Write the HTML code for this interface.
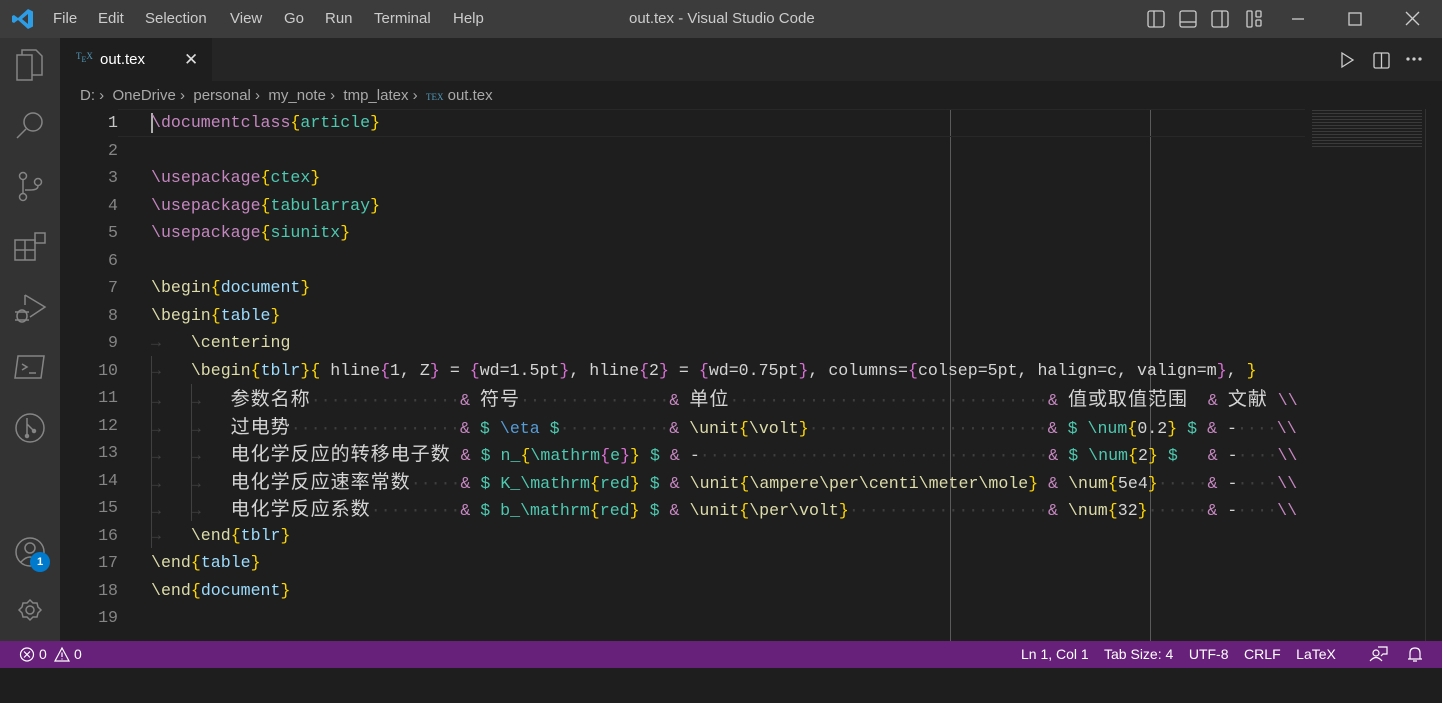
<!DOCTYPE html>
<html><head><meta charset="utf-8"><style>
*{margin:0;padding:0;box-sizing:border-box}
body{width:1442px;height:668px;background:#1e1e1e;overflow:hidden;position:relative;font-family:"Segoe UI","Liberation Sans","Noto Sans CJK SC",sans-serif;color:#ccc}
.abs{position:absolute}
#title{left:0;top:0;width:1442px;height:38px;background:#3c3c3c}
.menu{top:0;height:38px;line-height:38px;font-size:15px;color:#ccc}
#act{left:0;top:38px;width:60px;height:603px;background:#333}
#tabs{left:60px;top:38px;width:1382px;height:43px;background:#252526}
#tab{left:60px;top:38px;width:152px;height:43px;background:#1e1e1e}
#status{left:0;top:641px;width:1442px;height:27px;background:#68217a;color:#fff;font-size:14px;line-height:27px}
.code{font-family:"Liberation Mono","Noto Sans CJK SC",monospace;font-size:16.6px;white-space:pre;color:#d4d4d4}
.ln{left:60px;width:58px;text-align:right;color:#858585}
.row{left:151px;height:27.5px;line-height:27.5px}
.p{color:#c586c0}.y{color:#dcdcaa}.b{color:#9cdcfe}.t{color:#4ec9b0}.g{color:#ffd700}.o{color:#da70d6}.bl{color:#569cd6}.d{color:#3f3f3f}
.k{font-family:"Noto Sans CJK SC",sans-serif;letter-spacing:1px;font-size:19px}
.ar{color:#404040}
</style></head><body>
<div id="title" class="abs"></div>
<svg class="abs" style="left:12px;top:9px" width="22" height="20" viewBox="0 0 22 20"><path d="M16 0 L21 2.5 V17.5 L16 20 L6 11 L2 14 L0 13 V7 L2 6 L6 9 Z M16 5 L10 10 L16 15 Z" fill="#2d9de6"/></svg>
<div class="abs menu" style="left:53px">File</div>
<div class="abs menu" style="left:98px">Edit</div>
<div class="abs menu" style="left:145px">Selection</div>
<div class="abs menu" style="left:230px">View</div>
<div class="abs menu" style="left:284px">Go</div>
<div class="abs menu" style="left:325px">Run</div>
<div class="abs menu" style="left:374px">Terminal</div>
<div class="abs menu" style="left:453px">Help</div>
<div class="abs menu" style="left:629px">out.tex - Visual Studio Code</div>
<svg class="abs" style="left:1145px;top:8px" width="297" height="22" fill="none" stroke="#ccc" stroke-width="1.3">
<rect x="3" y="3" width="16" height="16" rx="2"/><line x1="9" y1="3" x2="9" y2="19"/>
<rect x="35" y="3" width="16" height="16" rx="2"/><line x1="35" y1="14" x2="51" y2="14"/>
<rect x="67" y="3" width="16" height="16" rx="2"/><line x1="77" y1="3" x2="77" y2="19"/>
<rect x="102" y="3" width="5" height="16" rx="1"/><rect x="111" y="3" width="5" height="6" rx="1"/><rect x="111" y="12" width="5" height="6" rx="1"/>
<line x1="147" y1="11" x2="159" y2="11"/>
<rect x="204" y="5" width="12" height="12"/>
<line x1="261" y1="4" x2="274" y2="17"/><line x1="274" y1="4" x2="261" y2="17"/>
</svg>
<div id="act" class="abs"></div>
<svg class="abs" style="left:0;top:40px" width="60" height="600" fill="none" stroke="#858585" stroke-width="1.5">
<path d="M22 15 H32 V40 H17 V15 Z M22 15 V10 H36 L42 16 V35 H32"/>
<circle cx="33" cy="82" r="9"/><line x1="26" y1="89" x2="17" y2="98"/>
<circle cx="23" cy="136" r="3.5"/><circle cx="23" cy="157" r="3.5"/><circle cx="38" cy="142" r="3.5"/><path d="M23 140 V153 M38 146 Q38 150 30 150 H25"/>
<path d="M15 200 H35 V220 H15 Z M15 210 H35 M25 200 V220"/><rect x="35" y="193" width="10" height="10"/>
<path d="M25 255 L45 267 L30 277 M25 255 V265"/><ellipse cx="22" cy="276" rx="5" ry="6"/><path d="M15 272 H29 M15 280 H29"/>
<path d="M18 316 H44 L41 338 H15 Z M22 324 L27 327 L22 330 M29 333 H36"/>
<circle cx="30" cy="388" r="14"/><path d="M27 378 V396 M27 384 L34 391"/><circle cx="27" cy="396" r="1.5" fill="#858585"/><circle cx="34" cy="391" r="1.5" fill="#858585"/>
<circle cx="30" cy="512" r="14"/><circle cx="30" cy="508" r="5"/><path d="M21 522 Q30 512 39 522"/>
<path d="M30 560 l3 3 h4 l1 4 l3 3 l-3 3 l-1 4 h-4 l-3 3 l-3 -3 h-4 l-1 -4 l-3 -3 l3 -3 l1 -4 h4 Z"/><circle cx="30" cy="570" r="4"/>
</svg>
<div class="abs" style="left:30px;top:552px;width:20px;height:20px;border-radius:10px;background:#007acc;color:#fff;font-size:11px;font-weight:bold;text-align:center;line-height:20px">1</div>
<div id="tabs" class="abs"></div>
<div id="tab" class="abs"></div>
<div class="abs" style="left:76px;top:51px;font-size:9px;color:#519aba;font-family:'Liberation Serif',serif">T<sub style="font-size:8px">E</sub>X</div>
<div class="abs" style="left:100px;top:38px;line-height:43px;font-size:15px;color:#fff">out.tex</div>
<div class="abs" style="left:184px;top:38px;line-height:43px;font-size:17px;color:#ddd">✕</div>
<svg class="abs" style="left:1338px;top:50px" width="90" height="20" fill="none" stroke="#ccc" stroke-width="1.3">
<path d="M4 3 L15 10 L4 17 Z"/><rect x="36" y="3" width="15" height="15" rx="1.5"/><line x1="43.5" y1="3" x2="43.5" y2="18"/>
<circle cx="70" cy="9" r="1" fill="#ccc"/><circle cx="76" cy="9" r="1" fill="#ccc"/><circle cx="82" cy="9" r="1" fill="#ccc"/>
</svg>
<div class="abs" style="left:80px;top:83px;font-size:15px;color:#a9a9a9;line-height:25px;white-space:pre">D: ›  OneDrive ›  personal ›  my_note ›  tmp_latex ›  <span style="color:#519aba;font-size:9px;font-family:'Liberation Serif',serif">TEX</span> out.tex</div>
<div class="abs" style="left:950px;top:109px;width:1px;height:532px;background:#5a5a5a"></div>
<div class="abs" style="left:1150px;top:109px;width:1px;height:532px;background:#5a5a5a"></div>
<div class="abs" style="left:118px;top:109px;width:1187px;height:28px;border-top:1px solid #282828;border-bottom:1px solid #282828"></div>
<div class="abs" style="left:151px;top:113px;width:2px;height:20px;background:#aeafad"></div>
<div class="abs" style="left:151px;top:356px;width:1px;height:192px;background:#404040"></div>
<div class="abs" style="left:191px;top:384px;width:1px;height:137px;background:#404040"></div>
<div class="abs" style="left:1425px;top:109px;width:1px;height:532px;background:#333"></div>
<div class="abs" style="left:1312px;top:109px;width:110px;height:40px;opacity:.5;background:repeating-linear-gradient(#1e1e1e 0 1px,#555 1px 2px,#1e1e1e 2px 3px)"></div>

<div class="code">
<div class="abs ln" style="top:109px;line-height:27.5px;color:#c6c6c6">1</div>
<div class="abs ln" style="top:136.5px;line-height:27.5px">2</div>
<div class="abs ln" style="top:164px;line-height:27.5px">3</div>
<div class="abs ln" style="top:191.5px;line-height:27.5px">4</div>
<div class="abs ln" style="top:219px;line-height:27.5px">5</div>
<div class="abs ln" style="top:246.5px;line-height:27.5px">6</div>
<div class="abs ln" style="top:274px;line-height:27.5px">7</div>
<div class="abs ln" style="top:301.5px;line-height:27.5px">8</div>
<div class="abs ln" style="top:329px;line-height:27.5px">9</div>
<div class="abs ln" style="top:356.5px;line-height:27.5px">10</div>
<div class="abs ln" style="top:384px;line-height:27.5px">11</div>
<div class="abs ln" style="top:411.5px;line-height:27.5px">12</div>
<div class="abs ln" style="top:439px;line-height:27.5px">13</div>
<div class="abs ln" style="top:466.5px;line-height:27.5px">14</div>
<div class="abs ln" style="top:494px;line-height:27.5px">15</div>
<div class="abs ln" style="top:521.5px;line-height:27.5px">16</div>
<div class="abs ln" style="top:549px;line-height:27.5px">17</div>
<div class="abs ln" style="top:576.5px;line-height:27.5px">18</div>
<div class="abs ln" style="top:604px;line-height:27.5px">19</div>

<div class="abs row" style="top:109px"><span class="p">\documentclass</span><span class="g">{</span><span class="t">article</span><span class="g">}</span></div>
<div class="abs row" style="top:164px"><span class="p">\usepackage</span><span class="g">{</span><span class="t">ctex</span><span class="g">}</span></div>
<div class="abs row" style="top:191.5px"><span class="p">\usepackage</span><span class="g">{</span><span class="t">tabularray</span><span class="g">}</span></div>
<div class="abs row" style="top:219px"><span class="p">\usepackage</span><span class="g">{</span><span class="t">siunitx</span><span class="g">}</span></div>
<div class="abs row" style="top:274px"><span class="y">\begin</span><span class="g">{</span><span class="b">document</span><span class="g">}</span></div>
<div class="abs row" style="top:301.5px"><span class="y">\begin</span><span class="g">{</span><span class="b">table</span><span class="g">}</span></div>
<div class="abs row" style="top:329px"><span class="ar">→   </span><span class="y">\centering</span></div>
<div class="abs row" style="top:356.5px"><span class="ar">→   </span><span class="y">\begin</span><span class="g">{</span><span class="b">tblr</span><span class="g">}{</span> hline<span class="o">{</span>1, Z<span class="o">}</span> = <span class="o">{</span>wd=1.5pt<span class="o">}</span>, hline<span class="o">{</span>2<span class="o">}</span> = <span class="o">{</span>wd=0.75pt<span class="o">}</span>, columns=<span class="o">{</span>colsep=5pt, halign=c, valign=m<span class="o">}</span>, <span class="g">}</span></div>
<div class="abs row" style="top:384px"><span class="ar">→   →   </span><span class="k">参数名称</span><span class="d">···············</span><span class="p">&amp;</span> <span class="k">符号</span><span class="d">···············</span><span class="p">&amp;</span> <span class="k">单位</span><span class="d">································</span><span class="p">&amp;</span> <span class="k">值或取值范围</span>  <span class="p">&amp;</span> <span class="k">文献</span> <span class="p">\\</span></div>
<div class="abs row" style="top:411.5px"><span class="ar">→   →   </span><span class="k">过电势</span><span class="d">·················</span><span class="p">&amp;</span> <span class="t">$</span> <span class="bl">\eta</span> <span class="t">$</span><span class="d">···········</span><span class="p">&amp;</span> <span class="y">\unit</span><span class="g">{</span><span class="y">\volt</span><span class="g">}</span><span class="d">························</span><span class="p">&amp;</span> <span class="t">$ \num</span><span class="g">{</span>0.2<span class="g">}</span> <span class="t">$</span> <span class="p">&amp;</span> -<span class="d">····</span><span class="p">\\</span></div>
<div class="abs row" style="top:439px"><span class="ar">→   →   </span><span class="k">电化学反应的转移电子数</span> <span class="p">&amp;</span> <span class="t">$ n_</span><span class="g">{</span><span class="t">\mathrm</span><span class="o">{</span><span class="t">e</span><span class="o">}</span><span class="g">}</span> <span class="t">$</span> <span class="p">&amp;</span> -<span class="d">···································</span><span class="p">&amp;</span> <span class="t">$ \num</span><span class="g">{</span>2<span class="g">}</span> <span class="t">$</span>   <span class="p">&amp;</span> -<span class="d">····</span><span class="p">\\</span></div>
<div class="abs row" style="top:466.5px"><span class="ar">→   →   </span><span class="k">电化学反应速率常数</span><span class="d">·····</span><span class="p">&amp;</span> <span class="t">$ K_\mathrm</span><span class="g">{</span><span class="t">red</span><span class="g">}</span> <span class="t">$</span> <span class="p">&amp;</span> <span class="y">\unit</span><span class="g">{</span><span class="y">\ampere\per\centi\meter\mole</span><span class="g">}</span> <span class="p">&amp;</span> <span class="y">\num</span><span class="g">{</span>5e4<span class="g">}</span><span class="d">·····</span><span class="p">&amp;</span> -<span class="d">····</span><span class="p">\\</span></div>
<div class="abs row" style="top:494px"><span class="ar">→   →   </span><span class="k">电化学反应系数</span><span class="d">·········</span><span class="p">&amp;</span> <span class="t">$ b_\mathrm</span><span class="g">{</span><span class="t">red</span><span class="g">}</span> <span class="t">$</span> <span class="p">&amp;</span> <span class="y">\unit</span><span class="g">{</span><span class="y">\per\volt</span><span class="g">}</span><span class="d">····················</span><span class="p">&amp;</span> <span class="y">\num</span><span class="g">{</span>32<span class="g">}</span><span class="d">······</span><span class="p">&amp;</span> -<span class="d">····</span><span class="p">\\</span></div>
<div class="abs row" style="top:521.5px"><span class="ar">→   </span><span class="y">\end</span><span class="g">{</span><span class="b">tblr</span><span class="g">}</span></div>
<div class="abs row" style="top:549px"><span class="y">\end</span><span class="g">{</span><span class="b">table</span><span class="g">}</span></div>
<div class="abs row" style="top:576.5px"><span class="y">\end</span><span class="g">{</span><span class="b">document</span><span class="g">}</span></div>
</div>

<div id="status" class="abs"></div>
<svg class="abs" style="left:19px;top:646px" width="70" height="17" fill="none" stroke="#fff" stroke-width="1.2">
<circle cx="8" cy="8.5" r="6.5"/><path d="M5 5.5 L11 11.5 M11 5.5 L5 11.5"/>
<path d="M43 2 L50 15 H36 Z M43 6.5 V11 M43 12.5 V13.5"/>
</svg>
<div class="abs" style="left:39px;top:641px;color:#fff;font-size:14px;line-height:27px">0</div>
<div class="abs" style="left:74px;top:641px;color:#fff;font-size:14px;line-height:27px">0</div>
<div class="abs" style="left:1021px;top:641px;color:#fff;font-size:14px;line-height:27px;white-space:pre">Ln 1, Col 1    Tab Size: 4    UTF-8    CRLF    LaTeX</div>
<svg class="abs" style="left:1368px;top:645px" width="60" height="19" fill="none" stroke="#fff" stroke-width="1.2">
<circle cx="8" cy="8" r="3"/><path d="M2 16 Q8 9 14 16 M10 2 H19 V9 H15 L13 11"/>
<path d="M42 14 V8 Q42 3 47 3 Q52 3 52 8 V14 Z M40 14 H54 M45 16 H49"/>
</svg>
</body></html>
